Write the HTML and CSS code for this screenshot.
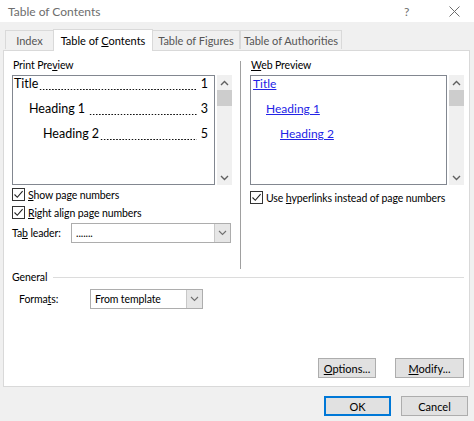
FILE: index.html
```html
<!DOCTYPE html>
<html>
<head>
<meta charset="utf-8">
<link rel="stylesheet" href="styles.css">
</head>
<body>
<div class="dialog">
  <div class="titlebar">
    <span class="title">Table of Contents</span>
    <span class="help">?</span>
    <span class="close"><svg width="11" height="11" viewBox="0 0 11 11"><path d="M0.5 0.5 L10.5 10.5 M10.5 0.5 L0.5 10.5" stroke="#6d6d6d" stroke-width="1" fill="none"/></svg></span>
  </div>
  <div class="tabs">
    <div class="tab tab-index"><span>Index</span></div>
    <div class="tab tab-active"><span>Table of <u>C</u>ontents</span></div>
    <div class="tab tab-figures"><span>Table of Figures</span></div>
    <div class="tab tab-auth"><span>Table of Authorities</span></div>
  </div>
  <div class="panel">
    <div class="columns">
      <div class="col col-left">
        <div class="label">Print Pre<u>v</u>iew</div>
        <div class="preview">
          <div class="preview-box print">
            <div class="toc-line lvl1"><span>Title</span><span class="dots"></span><span>1</span></div>
            <div class="toc-line lvl2"><span>Heading 1</span><span class="dots gap"></span><span>3</span></div>
            <div class="toc-line lvl3"><span>Heading 2</span><span class="dots"></span><span>5</span></div>
          </div>
          <div class="scrollbar">
            <svg class="arrow" width="9" height="6" viewBox="0 0 9 6"><path d="M1 5 L4.5 1.5 L8 5" stroke="#606060" stroke-width="1.4" fill="none"/></svg>
            <div class="thumb"></div>
            <div class="track"></div>
            <svg class="arrow" width="9" height="6" viewBox="0 0 9 6"><path d="M1 1 L4.5 4.5 L8 1" stroke="#606060" stroke-width="1.4" fill="none"/></svg>
          </div>
        </div>
        <div class="check-row">
          <span class="checkbox"><svg width="11" height="11" viewBox="0 0 11 11"><path d="M1.5 5.5 L4.3 8.3 L9.6 2.2" stroke="#222" stroke-width="1.1" fill="none"/></svg></span>
          <span><u>S</u>how page numbers</span>
        </div>
        <div class="check-row">
          <span class="checkbox"><svg width="11" height="11" viewBox="0 0 11 11"><path d="M1.5 5.5 L4.3 8.3 L9.6 2.2" stroke="#222" stroke-width="1.1" fill="none"/></svg></span>
          <span><u>R</u>ight align page numbers</span>
        </div>
        <div class="leader-row">
          <span class="leader-label">Ta<u>b</u> leader:</span>
          <div class="select leader-select">
            <span class="select-text">.......</span>
            <span class="select-btn"><svg width="9" height="6" viewBox="0 0 9 6"><path d="M1 1 L4.5 4.5 L8 1" stroke="#707070" stroke-width="1.1" fill="none"/></svg></span>
          </div>
        </div>
      </div>
      <div class="divider"></div>
      <div class="col col-right">
        <div class="label"><u>W</u>eb Preview</div>
        <div class="preview">
          <div class="preview-box web">
            <div class="web-line lvl1"><span class="link">Title</span></div>
            <div class="web-line lvl2"><span class="link">Heading 1</span></div>
            <div class="web-line lvl3"><span class="link">Heading 2</span></div>
          </div>
          <div class="scrollbar">
            <svg class="arrow" width="9" height="6" viewBox="0 0 9 6"><path d="M1 5 L4.5 1.5 L8 5" stroke="#606060" stroke-width="1.4" fill="none"/></svg>
            <div class="thumb"></div>
            <div class="track"></div>
            <svg class="arrow" width="9" height="6" viewBox="0 0 9 6"><path d="M1 1 L4.5 4.5 L8 1" stroke="#606060" stroke-width="1.4" fill="none"/></svg>
          </div>
        </div>
        <div class="check-row">
          <span class="checkbox"><svg width="11" height="11" viewBox="0 0 11 11"><path d="M1.5 5.5 L4.3 8.3 L9.6 2.2" stroke="#222" stroke-width="1.1" fill="none"/></svg></span>
          <span>Use <u>h</u>yperlinks instead of page numbers</span>
        </div>
      </div>
    </div>
    <div class="group-head">
      <span>General</span>
      <span class="group-line"></span>
    </div>
    <div class="formats-row">
      <span class="formats-label">Forma<u>t</u>s:</span>
      <div class="select formats-select">
        <span class="select-text">From template</span>
        <span class="select-btn"><svg width="9" height="6" viewBox="0 0 9 6"><path d="M1 1 L4.5 4.5 L8 1" stroke="#707070" stroke-width="1.1" fill="none"/></svg></span>
      </div>
    </div>
    <div class="actions">
      <button class="btn btn-options"><u>O</u>ptions...</button>
      <button class="btn btn-modify"><u>M</u>odify...</button>
    </div>
  </div>
  <div class="footer">
    <button class="btn btn-ok">OK</button>
    <button class="btn btn-cancel">Cancel</button>
  </div>
</div>
</body>
</html>
```
FILE: styles.css
```css
* { box-sizing: border-box; }
html, body { margin: 0; padding: 0; }
body {
  width: 474px;
  height: 421px;
  background: #f0f0f0;
  font-family: Lato, "Noto Sans", sans-serif;
  font-size: 10.5px;
  letter-spacing: -0.1px;
  color: #000;
  overflow: hidden;
}
.dialog {
  display: flex;
  flex-direction: column;
  height: 421px;
}
.titlebar {
  height: 22px;
  background: #fff;
  display: flex;
  align-items: center;
  padding-left: 8px;
  color: #6d6d6d;
  font-size: 12px;
  letter-spacing: 0;
}
.titlebar .title { flex: 1; }
.titlebar .help { width: 12px; margin-right: 33px; font-size: 12px; }
.titlebar .close { width: 11px; height: 11px; margin-right: 14px; display: flex; }

.tabs {
  height: 28px;
  display: flex;
  align-items: flex-end;
  padding-left: 5px;
  position: relative;
  z-index: 1;
  font-size: 11px;
  letter-spacing: 0;
}
.tab {
  height: 19px;
  border: 1px solid #d9d9d9;
  border-bottom: none;
  background: #f0f0f0;
  color: #555;
  display: flex;
  align-items: center;
  justify-content: center;
  margin-bottom: 1px;
  white-space: nowrap;
}
.tab-index { width: 48px; border-right: none; }
.tab-active {
  width: 100px;
  height: 22px;
  background: #fff;
  color: #000;
  margin-bottom: -1px;
  padding-bottom: 1px;
}
.tab-figures { width: 87px; border-left: none; }
.tab-auth { width: 102px; border-left: 1px solid #d9d9d9; }

.panel {
  margin-left: 3px;
  width: 467px;
  height: 337px;
  background: #fff;
  border: 1px solid #d9d9d9;
  display: flex;
  flex-direction: column;
  padding: 7px 5px 8px 8px;
}
.columns {
  display: flex;
  height: 211px;
}
.col { display: flex; flex-direction: column; }
.col-left { width: 220px; }
.divider {
  width: 1px;
  background: #a0a0a0;
  margin: 3px 9px 0 8px;
}
.col-right { width: 214px; white-space: nowrap; }
.label { height: 14px; line-height: 14px; margin-bottom: 3px; padding-left: 1px; }

.preview {
  display: flex;
  height: 110px;
}
.preview-box {
  flex: 1;
  border: 1px solid #828790;
  background: #fff;
  overflow: hidden;
}
.scrollbar {
  width: 15px;
  margin-left: 2px;
  background: #f0f0f0;
  display: flex;
  flex-direction: column;
  align-items: center;
}
.scrollbar .arrow { margin: 5px 0 4px; flex: none; }
.scrollbar .thumb { width: 15px; height: 16px; background: #cdcdcd; flex: none; }
.scrollbar .track { flex: 1; }

.print {
  padding: 0 6px 0 1px;
  font-family: Lato, "Noto Sans", sans-serif;
  font-size: 12.5px;
  letter-spacing: 0;
  display: flex;
  flex-direction: column;
  gap: 9px;
}
.toc-line {
  display: flex;
  height: 16px;
  line-height: 16px;
  white-space: nowrap;
}
.toc-line .dots {
  flex: 1;
  margin: 0 4px 0 1px;
  background-image: radial-gradient(circle, #111 0.75px, transparent 1.05px);
  background-size: 3.1px 3px;
  background-position: 0 12px;
  background-repeat: repeat-x;
}
.toc-line .dots.gap { margin-left: 4px; }
.print .lvl2 { padding-left: 15px; }
.print .lvl3 { padding-left: 29px; }

.web {
  padding: 0 2px;
  font-family: Lato, "Noto Sans", sans-serif;
  font-size: 12px;
  letter-spacing: 0;
  display: flex;
  flex-direction: column;
  gap: 9px;
}
.web-line { height: 16px; line-height: 16px; }
.link { color: #2323e6; text-decoration: underline; }
.web .lvl2 { padding-left: 13px; }
.web .lvl3 { padding-left: 27px; }

.check-row {
  display: flex;
  align-items: center;
  height: 17px;
  margin-top: 1px;
  gap: 3px;
}
.col-left .check-row:first-of-type { margin-top: 4px; }
.col-right .check-row { margin-top: 4px; }
.checkbox {
  width: 13px;
  height: 13px;
  border: 1px solid #333;
  background: #fff;
  display: flex;
}

.leader-row {
  display: flex;
  align-items: center;
  margin-top: 2px;
}
.leader-label { width: 59px; }
.select {
  display: flex;
  height: 20px;
  border: 1px solid #adadad;
  background: #fff;
}
.select-text { flex: 1; padding-left: 4px; line-height: 18px; }
.select-btn {
  width: 16px;
  background: #e6e6e6;
  border-left: 1px solid #c8c8c8;
  display: flex;
  align-items: center;
  justify-content: center;
}
.leader-select { width: 160px; }

.group-head {
  display: flex;
  align-items: center;
  gap: 6px;
  height: 16px;
}
.group-line { flex: 1; height: 1px; background: #dcdcdc; }

.formats-row {
  display: flex;
  align-items: center;
  margin-top: 4px;
  padding-left: 7px;
}
.formats-label { width: 71px; }
.formats-select { width: 113px; height: 20px; }

.actions {
  margin-top: auto;
  display: flex;
  justify-content: flex-end;
  gap: 19px;
}
.btn {
  height: 20px;
  background: #e1e1e1;
  border: 1px solid #adadad;
  font-family: Lato, "Noto Sans", sans-serif;
  font-size: 11px;
  color: #000;
  padding: 0;
}
.btn-options { width: 58px; }
.btn-modify { width: 69px; }

.footer {
  flex: 1;
  display: flex;
  justify-content: flex-end;
  align-items: flex-start;
  padding: 9px 6px 0 0;
  gap: 10px;
}
.btn-ok { width: 67px; border: 2px solid #0078d7; }
.btn-cancel { width: 67px; }
```
